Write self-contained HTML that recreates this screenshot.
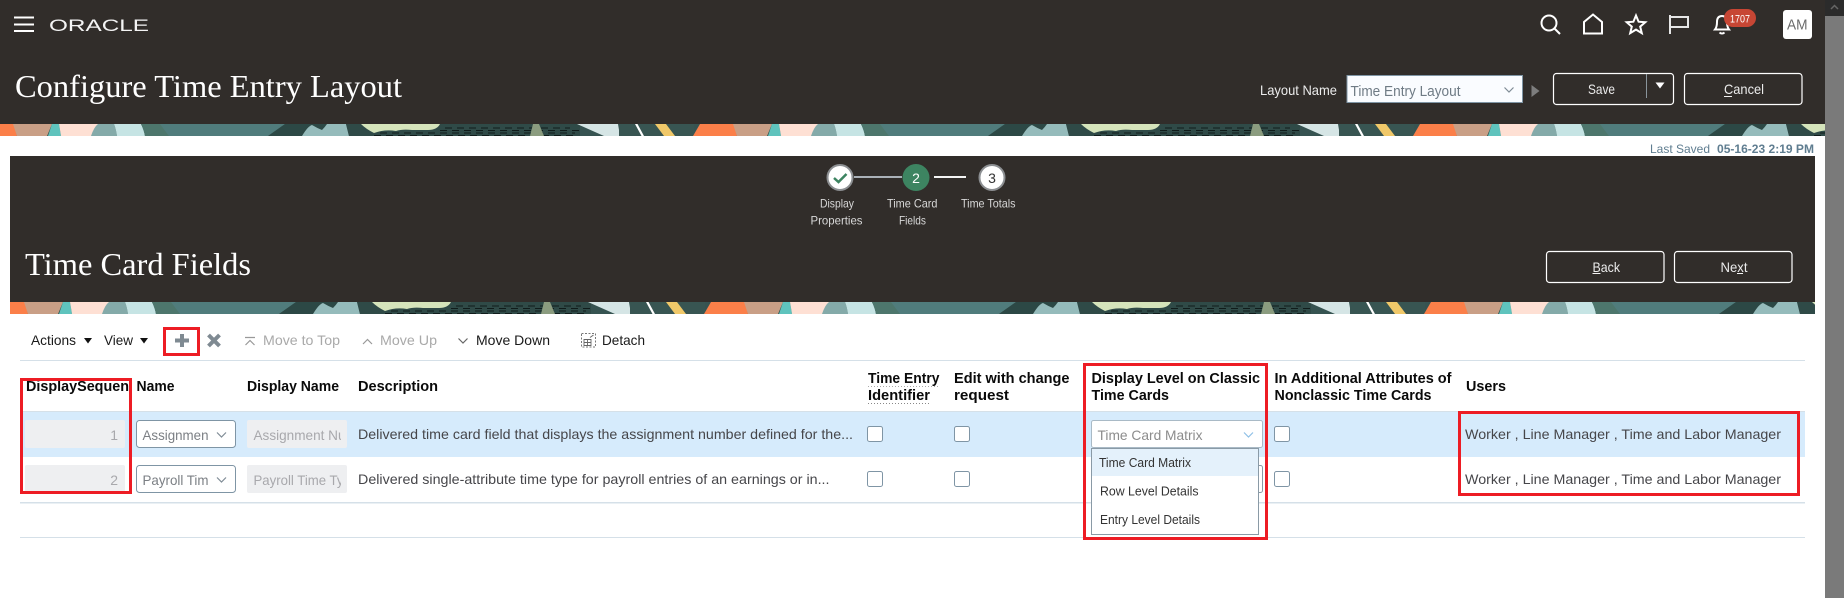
<!DOCTYPE html>
<html lang="en">
<head>
<meta charset="utf-8">
<title>Configure Time Entry Layout</title>
<style>
html,body{margin:0;padding:0;width:1844px;height:598px;overflow:hidden;background:#fff}
svg{display:block}
text{font-family:"Liberation Sans",Arial,sans-serif;white-space:pre}
.s{font-family:"Liberation Serif",serif;fill:#fff;font-size:32px}
.h{font-weight:bold;font-size:14.5px;fill:#0a0a0a}
.d{font-size:14px;fill:#46464a}
.w{fill:#ececec;font-size:14px}
.st{fill:#d8d8d8;font-size:12px}
.t{font-size:14px;fill:#1a1a1a}
.g{font-size:14px;fill:#a9a9a9}
.i{font-size:14px;fill:#7b7f84}
.n{font-size:14px;fill:#a8a8ac}
.m{font-size:12.5px;fill:#333}
.ic{fill:none;stroke:#fff;stroke-width:2}
.chev{fill:none;stroke:#7f8c96;stroke-width:1.2}
.box{fill:#fff;stroke:#7f95a5;stroke-width:1}
.cb{fill:#fff;stroke:#7f95a5;stroke-width:1}
.r{fill:none;stroke:#ed1c24;stroke-width:3}
.btn{fill:none;stroke:#fff;stroke-width:1.2}
</style>
</head>
<body>
<svg width="1844" height="598" viewBox="0 0 1844 598" xmlns="http://www.w3.org/2000/svg">
<defs>
<g id="tile">
<rect width="720" height="12" fill="#365351"/>
<polygon points="-30,12 -20,0 14,0 17,12" fill="#fb7f49"/>
<polygon points="13,0 52,0 47,12 17,12" fill="#c99f86"/>
<polygon points="52,0 59,0 61,12 48,12" fill="#5fc3bd"/>
<polygon points="59,0 99,0 93,12 61,12" fill="#fee0d4"/>
<path d="M91 12Q94 3 98 0H114Q116 5 117 12Z" fill="#84aaa9"/>
<path d="M114 0H141Q144 6 145 12H117Q116 5 114 0Z" fill="#c6e4e4"/>
<path d="M141 0H285L268 12H145Q144 6 141 0Z" fill="#507c7c"/>
<path d="M141 0H160L169 12H145Q144 6 141 0Z" fill="#4d766c"/>
<path d="M285 0H350V12H268Z" fill="#2c4845"/>
<path d="M302 12Q308 2 312 1Q317 4 322 6Q325 3 327 0H346L349 12Z" fill="#95bbbb"/>
<polygon points="346,0 580,0 580,12 349,12" fill="#2f4a47"/>
<path d="M361 0H440Q437 6 428 6Q420 6 412 6Q402 5 396 7Q385 5 374 9Q366 5 361 0Z" fill="#d5e4bb"/>
<g stroke="#101c1b" stroke-width="1" stroke-dasharray="7 5">
<line x1="380" y1="9" x2="575" y2="9"/>
<line x1="374" y1="11.5" x2="575" y2="11.5"/>
<line x1="445" y1="4" x2="570" y2="4"/>
<line x1="440" y1="6.5" x2="580" y2="6.5"/>
</g>
<polygon points="533,0 539,0 544,12 530,12" fill="#8b9c7f"/>
<polygon points="577,0 618,0 620,12 604,12" fill="#d5e5e5"/>
<rect x="619" width="75" height="12" fill="#385552"/>
<polygon points="635,0 637.5,0 644,12 641.5,12" fill="#fff"/>
<polygon points="655,0 666,0 675,12 664,12" fill="#f0c869"/>
<polygon points="693,12 700,0 720,0 720,12" fill="#fb7f49"/>
</g>
<pattern id="b1" x="0" y="124" width="720" height="12" patternUnits="userSpaceOnUse"><use href="#tile"/></pattern>
<pattern id="b2" x="11" y="302" width="720" height="12" patternUnits="userSpaceOnUse"><use href="#tile"/></pattern>
<clipPath id="c1"><rect x="20" y="370" width="110" height="30"/></clipPath>
<clipPath id="c2"><rect x="250" y="420" width="91" height="75"/></clipPath>
</defs>

<!-- Global header -->
<rect width="1826" height="124" fill="#312d2a"/>
<rect y="124" width="1826" height="12" fill="url(#b1)"/>
<rect x="1825" width="19" height="598" fill="#7a7a7a"/>
<rect x="1825" width="19" height="16" fill="#2b2b2b"/>
<path d="M1831 9l3.500-3.500 3.500 3.500" fill="none" stroke="#666" stroke-width="1.500"/>

<g fill="#fff"><rect x="14" y="16.500" width="20" height="2"/><rect x="14" y="23.500" width="20" height="2"/><rect x="14" y="30" width="20" height="2"/></g>
<text x="49" y="31" font-size="16.500" fill="#f4f4f4" textLength="100" lengthAdjust="spacingAndGlyphs">ORACLE</text>

<circle class="ic" cx="1549" cy="23" r="7.500"/><path class="ic" d="M1554.500 28.500L1560 34"/>
<path class="ic" d="M1584 33.500V22L1593 14.500L1602 22V33.500Z"/>
<path class="ic" d="M1636 15.500L1638.600 21.700L1645.300 22.200L1640.200 26.600L1641.800 33.100L1636 29.600L1630.200 33.100L1631.800 26.600L1626.700 22.200L1633.400 21.700Z"/>
<path class="ic" style="stroke:#e6e6e6" d="M1670 15V34M1670 17H1688V27H1670"/>
<path class="ic" d="M1715 29.500Q1717 27 1717 22Q1717 16 1722 16Q1727 16 1727 22Q1727 27 1729 29.500ZM1719.500 32.500Q1722 34.500 1724.500 32.500"/>
<rect x="1724" y="9" width="32" height="18" rx="9" fill="#c74634"/>
<text x="1730" y="22.500" font-size="11" fill="#fff" textLength="20" lengthAdjust="spacingAndGlyphs">1707</text>
<rect x="1783" y="10" width="29" height="29" rx="3" fill="#fff"/>
<text x="1787" y="29.500" font-size="15" fill="#6a6a6a" textLength="20.500" lengthAdjust="spacingAndGlyphs">AM</text>

<text class="s" x="15" y="97" textLength="387" lengthAdjust="spacingAndGlyphs">Configure Time Entry Layout</text>
<text class="w" x="1260" y="95" textLength="77" lengthAdjust="spacingAndGlyphs">Layout Name</text>
<rect x="1347" y="75.500" width="175.500" height="27" fill="#fafcff" stroke="#7f95a5"/>
<text x="1350.500" y="96" font-size="15" fill="#6f7b85" textLength="110" lengthAdjust="spacingAndGlyphs">Time Entry Layout</text>
<path class="chev" d="M1504.500 87.500l4.500 4.500 4.500-4.500"/>
<polygon points="1531.500,85 1539.500,91 1531.500,97" fill="#7d7d7d"/>
<rect class="btn" x="1553.500" y="73.500" width="120" height="31" rx="3"/>
<rect x="1646" y="74" width="1" height="24" fill="#8a959c"/>
<polygon points="1655.500,82.500 1664.500,82.500 1660,88.500" fill="#fff"/>
<text class="w" x="1588" y="94" textLength="27" lengthAdjust="spacingAndGlyphs">Save</text>
<rect class="btn" x="1684.500" y="73.500" width="117.500" height="31" rx="3"/>
<text class="w" x="1724" y="94" textLength="40" lengthAdjust="spacingAndGlyphs">Cancel</text>
<rect x="1724" y="96" width="8" height="1" fill="#f2f2f2"/>

<text x="1650" y="153" font-size="12" fill="#5f7d90" textLength="60" lengthAdjust="spacingAndGlyphs">Last Saved</text>
<text x="1717" y="153" font-size="12" font-weight="bold" fill="#5f7d90" textLength="97" lengthAdjust="spacingAndGlyphs">05-16-23 2:19 PM</text>

<!-- Train panel -->
<rect x="10" y="156" width="1805" height="146" fill="#312d2a"/>
<rect x="10" y="302" width="1805" height="12" fill="url(#b2)"/>
<rect x="854" y="176" width="48" height="2" fill="#aab1b8"/>
<rect x="934" y="176" width="32" height="2" fill="#f4f4f4"/>
<circle cx="840" cy="177.500" r="12.500" fill="#fff" stroke="#8c8f92" stroke-width="2"/>
<path d="M834 178l4.500 4 8-8" fill="none" stroke="#3d8461" stroke-width="2.500"/>
<circle cx="916" cy="177.500" r="13.500" fill="#3d8461"/>
<text x="916" y="183" font-size="14" fill="#fff" text-anchor="middle">2</text>
<circle cx="992" cy="177.500" r="12.500" fill="#fff" stroke="#8c8f92" stroke-width="2"/>
<text x="992" y="183" font-size="14" fill="#333" text-anchor="middle">3</text>
<text class="st" x="820" y="207.500" textLength="34" lengthAdjust="spacingAndGlyphs">Display</text>
<text class="st" x="810.500" y="224.500" textLength="52" lengthAdjust="spacingAndGlyphs">Properties</text>
<text class="st" x="887" y="207.500" textLength="50.500" lengthAdjust="spacingAndGlyphs">Time Card</text>
<text class="st" x="899" y="224.500" textLength="27" lengthAdjust="spacingAndGlyphs">Fields</text>
<text class="st" x="961" y="207.500" textLength="54.500" lengthAdjust="spacingAndGlyphs">Time Totals</text>
<text class="s" x="25" y="275" textLength="226" lengthAdjust="spacingAndGlyphs">Time Card Fields</text>
<rect class="btn" x="1546.500" y="251.500" width="117.500" height="31" rx="3"/>
<text class="w" x="1592.500" y="272" textLength="27.500" lengthAdjust="spacingAndGlyphs">Back</text>
<rect x="1592.500" y="273" width="8" height="1" fill="#f2f2f2"/>
<rect class="btn" x="1674.500" y="251.500" width="117.500" height="31" rx="3"/>
<text class="w" x="1720.500" y="272" textLength="27" lengthAdjust="spacingAndGlyphs">Next</text>
<rect x="1737" y="273" width="6" height="1" fill="#f2f2f2"/>

<!-- Toolbar -->
<text class="t" x="31" y="345" textLength="45" lengthAdjust="spacingAndGlyphs">Actions</text>
<polygon points="84,338 92,338 88,343.500" fill="#111"/>
<text class="t" x="104" y="345" textLength="29" lengthAdjust="spacingAndGlyphs">View</text>
<polygon points="140,338 148,338 144,343.500" fill="#111"/>
<path d="M182 334V347M175 340.500H189" stroke="#7f8a92" stroke-width="4" fill="none"/>
<path d="M208.500 335L219.500 346M219.500 335L208.500 346" stroke="#7f8a92" stroke-width="4" fill="none"/>
<path d="M245 337.500H255M245.500 345L250 340.500L254.500 345" fill="none" stroke="#999" stroke-width="1.200"/>
<text class="g" x="263" y="345" textLength="77" lengthAdjust="spacingAndGlyphs">Move to Top</text>
<path d="M363 344L367.500 339.500L372 344" fill="none" stroke="#999" stroke-width="1.200"/>
<text class="g" x="380" y="345" textLength="57" lengthAdjust="spacingAndGlyphs">Move Up</text>
<path d="M458.500 338.500L463 343L467.500 338.500" fill="none" stroke="#666" stroke-width="1.200"/>
<text class="t" x="476" y="345" textLength="74" lengthAdjust="spacingAndGlyphs">Move Down</text>
<rect x="581.500" y="333.500" width="14" height="13.500" fill="none" stroke="#777" stroke-dasharray="2 1.500"/>
<path d="M584 339.500h7v6h-7zM584 342.500h7M587.500 339.500v6" fill="none" stroke="#666" stroke-width=".9"/>
<path d="M590 337.500l3.500-2.500" stroke="#666" fill="none"/>
<text class="t" x="602" y="345" textLength="43" lengthAdjust="spacingAndGlyphs">Detach</text>
<rect x="20" y="360" width="1785" height="1" fill="#d5e0e8"/>

<!-- Table header -->
<text class="h" x="26" y="391" textLength="111" lengthAdjust="spacingAndGlyphs" clip-path="url(#c1)">DisplaySequenc</text>
<text class="h" x="136.500" y="391" textLength="38" lengthAdjust="spacingAndGlyphs">Name</text>
<text class="h" x="247" y="391" textLength="92" lengthAdjust="spacingAndGlyphs">Display Name</text>
<text class="h" x="358" y="391" textLength="80" lengthAdjust="spacingAndGlyphs">Description</text>
<text class="h" x="868" y="383" textLength="71.500" lengthAdjust="spacingAndGlyphs">Time Entry</text>
<text class="h" x="868" y="400" textLength="62" lengthAdjust="spacingAndGlyphs">Identifier</text>
<line x1="868" y1="403.500" x2="930" y2="403.500" stroke="#888" stroke-dasharray="1 2"/>
<line x1="868" y1="386.500" x2="939" y2="386.500" stroke="#aaa" stroke-dasharray="1 2"/>
<text class="h" x="954" y="383" textLength="115.500" lengthAdjust="spacingAndGlyphs">Edit with change</text>
<text class="h" x="954" y="400" textLength="55" lengthAdjust="spacingAndGlyphs">request</text>
<text class="h" x="1091.500" y="383" textLength="168.500" lengthAdjust="spacingAndGlyphs">Display Level on Classic</text>
<text class="h" x="1091.500" y="400" textLength="77.500" lengthAdjust="spacingAndGlyphs">Time Cards</text>
<text class="h" x="1274.500" y="383" textLength="177" lengthAdjust="spacingAndGlyphs">In Additional Attributes of</text>
<text class="h" x="1274.500" y="400" textLength="157" lengthAdjust="spacingAndGlyphs">Nonclassic Time Cards</text>
<text class="h" x="1466" y="391" textLength="40" lengthAdjust="spacingAndGlyphs">Users</text>
<rect x="20" y="411" width="1785" height="1" fill="#d5e0e8"/>

<!-- Rows -->
<rect x="20" y="412" width="1785" height="45" fill="#d6ebfc"/>
<rect x="20" y="502" width="1785" height="1.500" fill="#d5e0e8"/>
<rect x="20" y="537" width="1785" height="1" fill="#d5e0e8"/>

<rect x="25" y="420" width="100" height="28" rx="2" fill="#eeeff1"/>
<rect x="25" y="465" width="100" height="28" rx="2" fill="#eeeff1"/>
<text class="n" x="118" y="440" text-anchor="end">1</text>
<text class="n" x="118" y="485" text-anchor="end">2</text>

<rect class="box" x="136.500" y="420.500" width="99" height="27" rx="3"/>
<rect class="box" x="136.500" y="465.500" width="99" height="27" rx="3"/>
<text class="i" x="142.500" y="440" textLength="66" lengthAdjust="spacingAndGlyphs">Assignmen</text>
<text class="i" x="142.500" y="485" textLength="66" lengthAdjust="spacingAndGlyphs">Payroll Tim</text>
<path class="chev" d="M217 432.500l4.500 4.500 4.500-4.500M217 477.500l4.500 4.500 4.500-4.500"/>

<rect x="247" y="420" width="100" height="28" rx="2" fill="#eeeff1"/>
<rect x="247" y="465" width="100" height="28" rx="2" fill="#eeeff1"/>
<g clip-path="url(#c2)">
<text class="n" x="253.500" y="440" textLength="92" lengthAdjust="spacingAndGlyphs">Assignment Nu</text>
<text class="n" x="253.500" y="485" textLength="90" lengthAdjust="spacingAndGlyphs">Payroll Time Ty</text>
</g>

<text class="d" x="358" y="439" textLength="495" lengthAdjust="spacingAndGlyphs">Delivered time card field that displays the assignment number defined for the...</text>
<text class="d" x="358" y="484" textLength="471.500" lengthAdjust="spacingAndGlyphs">Delivered single-attribute time type for payroll entries of an earnings or in...</text>

<rect class="cb" x="867.500" y="426.500" width="15" height="15" rx="2"/>
<rect class="cb" x="867.500" y="471.500" width="15" height="15" rx="2"/>
<rect class="cb" x="954.500" y="426.500" width="15" height="15" rx="2"/>
<rect class="cb" x="954.500" y="471.500" width="15" height="15" rx="2"/>
<rect class="cb" x="1274.500" y="426.500" width="15" height="15" rx="2"/>
<rect class="cb" x="1274.500" y="471.500" width="15" height="15" rx="2"/>

<rect x="1091.500" y="420.500" width="171" height="27" rx="2" fill="#fff" stroke="#a9bac6"/>
<rect x="1091.500" y="465.500" width="171" height="27" rx="2" fill="#fff" stroke="#8a9aa6"/>
<text x="1097.500" y="440" font-size="14" fill="#8c8c8c" textLength="105" lengthAdjust="spacingAndGlyphs">Time Card Matrix</text>
<path d="M1244 432.500l4.500 4.500 4.500-4.500" fill="none" stroke="#8fc0e6" stroke-width="1.200"/>

<!-- Dropdown -->
<rect x="1091.500" y="448.500" width="167" height="86" fill="#fff" stroke="#8a9aa6"/>
<rect x="1092" y="449" width="166" height="27" fill="#e4f1fb"/>
<text class="m" x="1099" y="467" textLength="92" lengthAdjust="spacingAndGlyphs">Time Card Matrix</text>
<text class="m" x="1100" y="495.500" textLength="98.500" lengthAdjust="spacingAndGlyphs">Row Level Details</text>
<text class="m" x="1100" y="524" textLength="100" lengthAdjust="spacingAndGlyphs">Entry Level Details</text>

<text class="d" x="1465" y="439" textLength="316" lengthAdjust="spacingAndGlyphs">Worker , Line Manager , Time and Labor Manager</text>
<text class="d" x="1465" y="484" textLength="316" lengthAdjust="spacingAndGlyphs">Worker , Line Manager , Time and Labor Manager</text>

<!-- Annotations -->
<rect class="r" x="164.500" y="328.500" width="34" height="26"/>
<rect class="r" x="21.500" y="379.500" width="109" height="113"/>
<rect class="r" x="1084.500" y="364.500" width="182" height="174"/>
<rect class="r" x="1459.500" y="412.500" width="339" height="82"/>
</svg>
</body>
</html>
